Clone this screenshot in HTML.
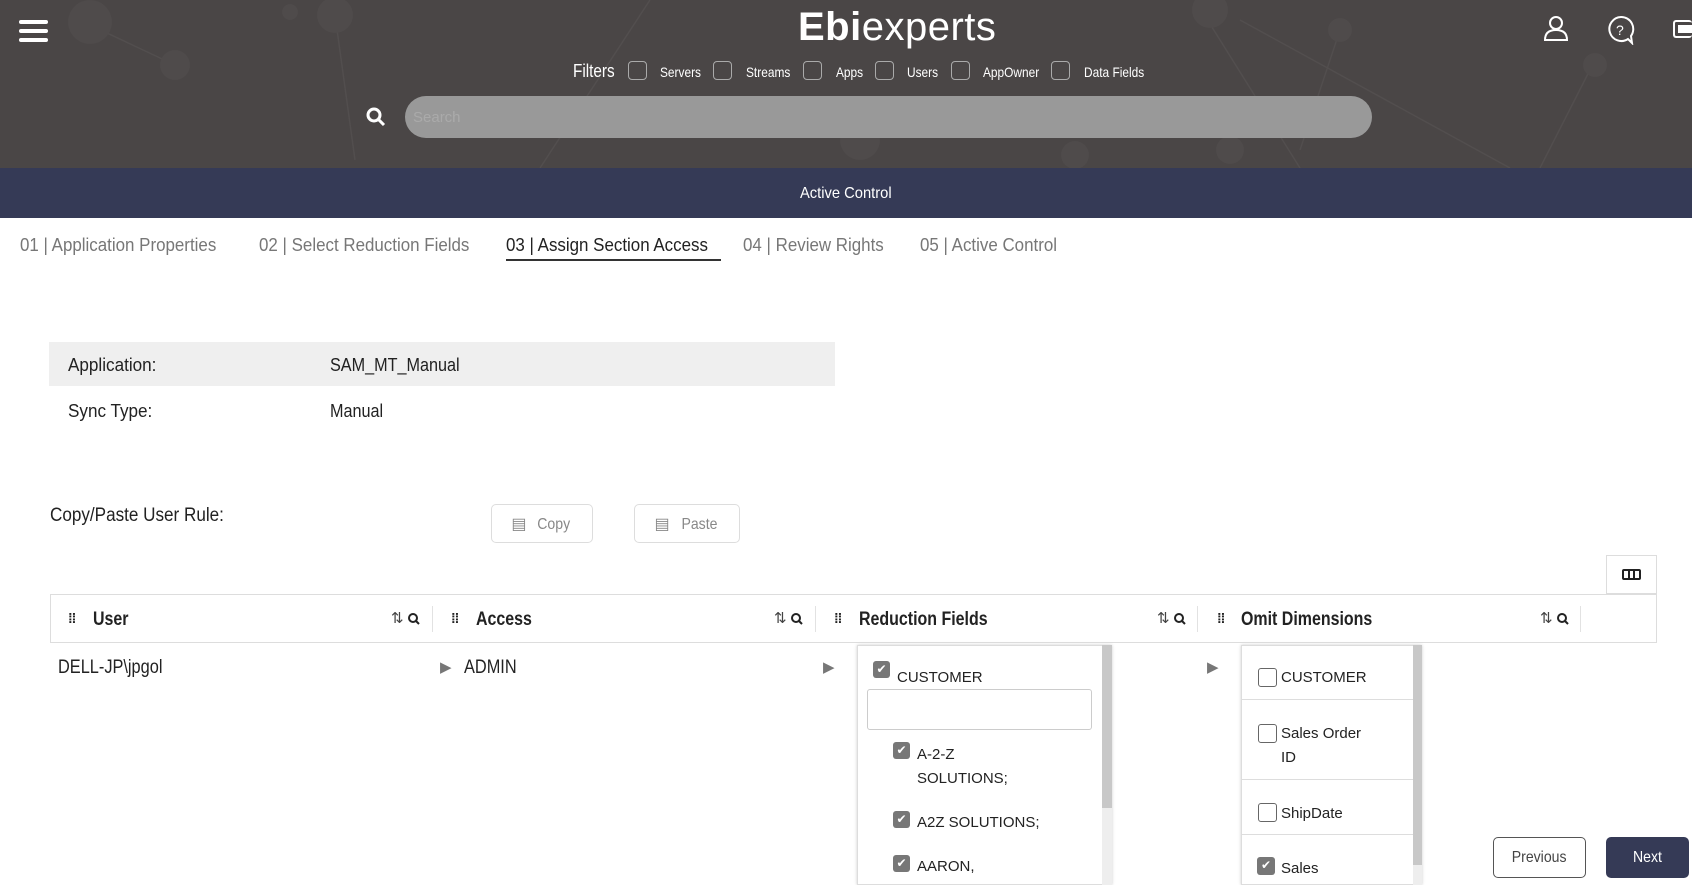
<!DOCTYPE html>
<html><head><meta charset="utf-8"><style>
*{box-sizing:border-box;margin:0;padding:0}
body{width:1692px;height:879px;overflow:hidden;background:#fff;font-family:"Liberation Sans",sans-serif;color:#222;position:relative}
.a{position:absolute;white-space:nowrap}
.n{transform-origin:0 0}
.hdr{left:0;top:0;width:1692px;height:168px;background:#4a4646;overflow:hidden}
.nav{left:0;top:168px;width:1692px;height:50px;background:#353a56;color:#fff;font-size:16px;text-align:center;line-height:52px}
.cb{width:19px;height:19px;border:1.5px solid #aaa;border-radius:4px}
.fl{color:#fff;font-size:14px;transform:scaleX(.85);transform-origin:0 0}
.tab{font-size:18px;color:#777;top:235px;transform:scaleX(.94);transform-origin:0 0}
.th{font-size:19px;font-weight:bold;color:#222;top:609px;transform:scaleX(.84);transform-origin:0 0}
.grip{font-size:14px;font-weight:bold;top:610px;letter-spacing:-1px}
.sep{width:1px;height:26px;background:#e2e2e2;top:606px}
.dd{font-size:15px;color:#222}
.ck{width:17px;height:17px;background:#777;border-radius:3px;color:#fff;font-size:12px;line-height:17px;text-align:center;font-family:"DejaVu Sans",sans-serif}
.uc{width:19px;height:19px;border:1.5px solid #666;border-radius:3px}
.btn{border:1px solid #ddd;border-radius:5px;color:#888;font-size:16px;text-align:center}
.srt{top:610px}
</style></head><body>
<div class="a hdr">
<svg width="1692" height="168" style="position:absolute;left:0;top:0">
<g stroke="#524e4e" stroke-width="1.5" fill="none">
<line x1="90" y1="25" x2="175" y2="65"/><line x1="335" y1="15" x2="355" y2="160"/><line x1="650" y1="0" x2="540" y2="168"/><line x1="1195" y1="0" x2="1300" y2="168"/><line x1="1240" y1="20" x2="1510" y2="168"/><line x1="1595" y1="60" x2="1540" y2="168"/><line x1="1340" y1="30" x2="1300" y2="150"/></g>
<g fill="#4f4b4b"><circle cx="90" cy="22" r="22"/><circle cx="175" cy="65" r="15"/><circle cx="335" cy="15" r="18"/><circle cx="290" cy="12" r="8"/><circle cx="1210" cy="10" r="18"/><circle cx="1340" cy="30" r="12"/><circle cx="1595" cy="65" r="12"/><circle cx="1230" cy="150" r="14"/><circle cx="860" cy="140" r="20"/><circle cx="1075" cy="155" r="14"/></g>
</svg>
</div>
<div class="a" style="left:19px;top:20px;width:29px;height:4px;background:#fff;border-radius:2px;box-shadow:0 9px 0 #fff,0 18px 0 #fff"></div>
<div class="a" style="left:798px;top:5px;font-size:40px;color:#fff;letter-spacing:0.5px"><b>Ebi</b>experts</div>
<svg class="a" style="left:1542px;top:14px" width="28" height="28" fill="none" stroke="#fff" stroke-width="2"><circle cx="14" cy="9" r="6"/><path d="M3 26 Q3 16 14 16 Q25 16 25 26 Z"/></svg>
<svg class="a" style="left:1606px;top:15px" width="30" height="30" fill="none" stroke="#fff" stroke-width="2"><path d="M15 2 A12 12 0 1 0 22 24 L26 28 L25 21 A12 12 0 0 0 15 2Z"/><text x="10" y="20" fill="#fff" stroke="none" font-size="14" font-family="Liberation Sans">?</text></svg>
<div class="a" style="left:1673px;top:20px;width:19px;height:18px;border:2.5px solid #fff;border-right:none;border-radius:3px"></div>
<div class="a" style="left:1678px;top:25px;width:14px;height:8px;background:#fff"></div>
<div class="a fl" style="left:573px;top:61px;font-size:18px">Filters</div>
<div class="a cb" style="left:628px;top:61px"></div><div class="a fl" style="left:660px;top:64px">Servers</div>
<div class="a cb" style="left:713px;top:61px"></div><div class="a fl" style="left:746px;top:64px">Streams</div>
<div class="a cb" style="left:803px;top:61px"></div><div class="a fl" style="left:836px;top:64px">Apps</div>
<div class="a cb" style="left:875px;top:61px"></div><div class="a fl" style="left:907px;top:64px">Users</div>
<div class="a cb" style="left:951px;top:61px"></div><div class="a fl" style="left:983px;top:64px">AppOwner</div>
<div class="a cb" style="left:1051px;top:61px"></div><div class="a fl" style="left:1084px;top:64px">Data Fields</div>
<svg class="a" style="left:366px;top:107px" width="20" height="20" fill="none" stroke="#fff" stroke-width="3"><circle cx="8" cy="8" r="6"/><line x1="12" y1="12" x2="18" y2="18"/></svg>
<div class="a" style="left:405px;top:96px;width:967px;height:42px;background:#999;border-radius:21px;color:#aaa;font-size:15px;line-height:44px;padding-left:8px">Search</div>
<div class="a nav"><span style="display:inline-block;transform:scaleX(.92)">Active Control</span></div>
<div class="a tab" style="left:20px">01 | Application Properties</div>
<div class="a tab" style="left:259px">02 | Select Reduction Fields</div>
<div class="a tab" style="left:506px;color:#222">03 | Assign Section Access</div>
<div class="a" style="left:506px;top:259px;width:215px;height:2px;background:#333"></div>
<div class="a tab" style="left:743px">04 | Review Rights</div>
<div class="a tab" style="left:920px">05 | Active Control</div>
<div class="a" style="left:49px;top:342px;width:786px;height:44px;background:#efefef"></div>
<div class="a n" style="left:68px;top:355px;font-size:18px;transform:scaleX(.95)">Application:</div>
<div class="a n" style="left:330px;top:355px;font-size:18px;transform:scaleX(.9)">SAM_MT_Manual</div>
<div class="a n" style="left:68px;top:401px;font-size:18px;transform:scaleX(.95)">Sync Type:</div>
<div class="a n" style="left:330px;top:401px;font-size:18px;transform:scaleX(.9)">Manual</div>
<div class="a n" style="left:50px;top:505px;font-size:19px;transform:scaleX(.9)">Copy/Paste User Rule:</div>
<div class="a btn" style="left:491px;top:504px;width:102px;height:39px;line-height:40px">▤ &nbsp;<span style="display:inline-block;transform:scaleX(.88)">Copy</span></div>
<div class="a btn" style="left:634px;top:504px;width:106px;height:39px;line-height:40px">▤ &nbsp;<span style="display:inline-block;transform:scaleX(.88)">Paste</span></div>
<div class="a" style="left:1606px;top:555px;width:51px;height:39px;border:1px solid #ddd"></div>
<div class="a" style="left:1622px;top:569px;width:19px;height:11px;border:2px solid #222;border-radius:2px;background:linear-gradient(90deg,transparent 4px,#222 4px,#222 6px,transparent 6px,transparent 9px,#222 9px,#222 11px,transparent 11px)"></div>
<div class="a" style="left:50px;top:594px;width:1607px;height:49px;border:1px solid #ddd"></div>
<svg width="0" height="0" style="position:absolute"><defs><g id="si"><text x="0" y="13" font-size="15" font-family="DejaVu Sans" fill="#444">⇅</text><circle cx="22" cy="8" r="4" fill="none" stroke="#222" stroke-width="2"/><line x1="25" y1="11" x2="28" y2="14" stroke="#222" stroke-width="2"/></g></defs></svg>
<div class="a grip" style="left:68px">⁞⁞</div><div class="a th" style="left:93px">User</div><svg class="a srt" style="left:391px" width="30" height="18"><use href="#si"/></svg><div class="a sep" style="left:432px"></div>
<div class="a grip" style="left:451px">⁞⁞</div><div class="a th" style="left:476px">Access</div><svg class="a srt" style="left:774px" width="30" height="18"><use href="#si"/></svg><div class="a sep" style="left:815px"></div>
<div class="a grip" style="left:834px">⁞⁞</div><div class="a th" style="left:859px">Reduction Fields</div><svg class="a srt" style="left:1157px" width="30" height="18"><use href="#si"/></svg><div class="a sep" style="left:1197px"></div>
<div class="a grip" style="left:1217px">⁞⁞</div><div class="a th" style="left:1241px">Omit Dimensions</div><svg class="a srt" style="left:1540px" width="30" height="18"><use href="#si"/></svg><div class="a sep" style="left:1580px"></div>
<div class="a n" style="left:58px;top:657px;font-size:19px;transform:scaleX(.86)">DELL-JP\jpgol</div>
<div class="a" style="left:440px;top:658px;font-size:15px;color:#777">▶</div>
<div class="a n" style="left:464px;top:657px;font-size:19px;transform:scaleX(.86)">ADMIN</div>
<div class="a" style="left:823px;top:658px;font-size:15px;color:#777">▶</div>
<div class="a" style="left:1207px;top:658px;font-size:15px;color:#777">▶</div>
<div class="a" style="left:857px;top:645px;width:255px;height:240px;border:1px solid #ddd;border-right:none;background:#fff;box-shadow:0 0 3px #ccc"></div>
<div class="a" style="left:1102px;top:645px;width:10px;height:240px;background:#eee"></div>
<div class="a" style="left:1102px;top:645px;width:10px;height:163px;background:#c8c8c8"></div>
<div class="a ck" style="left:873px;top:661px">✔</div>
<div class="a dd" style="left:897px;top:669px">CUSTOMER</div>
<div class="a" style="left:867px;top:689px;width:225px;height:41px;border:1px solid #ccc;border-radius:3px"></div>
<div class="a ck" style="left:893px;top:742px">✔</div>
<div class="a dd" style="left:917px;top:746px">A-2-Z</div>
<div class="a dd" style="left:917px;top:770px">SOLUTIONS;</div>
<div class="a ck" style="left:893px;top:811px">✔</div>
<div class="a dd" style="left:917px;top:814px">A2Z SOLUTIONS;</div>
<div class="a ck" style="left:893px;top:855px">✔</div>
<div class="a dd" style="left:917px;top:858px">AARON,</div>
<div class="a" style="left:1241px;top:645px;width:181px;height:240px;border:1px solid #ddd;border-right:none;background:#fff;box-shadow:0 0 3px #ccc"></div>
<div class="a" style="left:1413px;top:645px;width:9px;height:240px;background:#eee"></div>
<div class="a" style="left:1413px;top:645px;width:9px;height:220px;background:#c8c8c8"></div>
<div class="a" style="left:1241px;top:699px;width:172px;height:1px;background:#ddd"></div>
<div class="a" style="left:1241px;top:779px;width:172px;height:1px;background:#ddd"></div>
<div class="a" style="left:1241px;top:834px;width:172px;height:1px;background:#ddd"></div>
<div class="a uc" style="left:1258px;top:668px"></div><div class="a dd" style="left:1281px;top:669px">CUSTOMER</div>
<div class="a uc" style="left:1258px;top:724px"></div><div class="a dd" style="left:1281px;top:725px">Sales Order</div><div class="a dd" style="left:1281px;top:749px">ID</div>
<div class="a uc" style="left:1258px;top:803px"></div><div class="a dd" style="left:1281px;top:805px">ShipDate</div>
<div class="a ck" style="left:1257px;top:857px;width:18px;height:18px">✔</div><div class="a dd" style="left:1281px;top:860px">Sales</div>
<div class="a" style="left:1493px;top:837px;width:93px;height:41px;border:1px solid #555;border-radius:5px;font-size:16px;color:#444;text-align:center;line-height:40px"><span style="display:inline-block;transform:scaleX(.88)">Previous</span></div>
<div class="a" style="left:1606px;top:837px;width:83px;height:41px;background:#353a56;border-radius:5px;font-size:16px;color:#fff;text-align:center;line-height:42px"><span style="display:inline-block;transform:scaleX(.88)">Next</span></div>
</body></html>
